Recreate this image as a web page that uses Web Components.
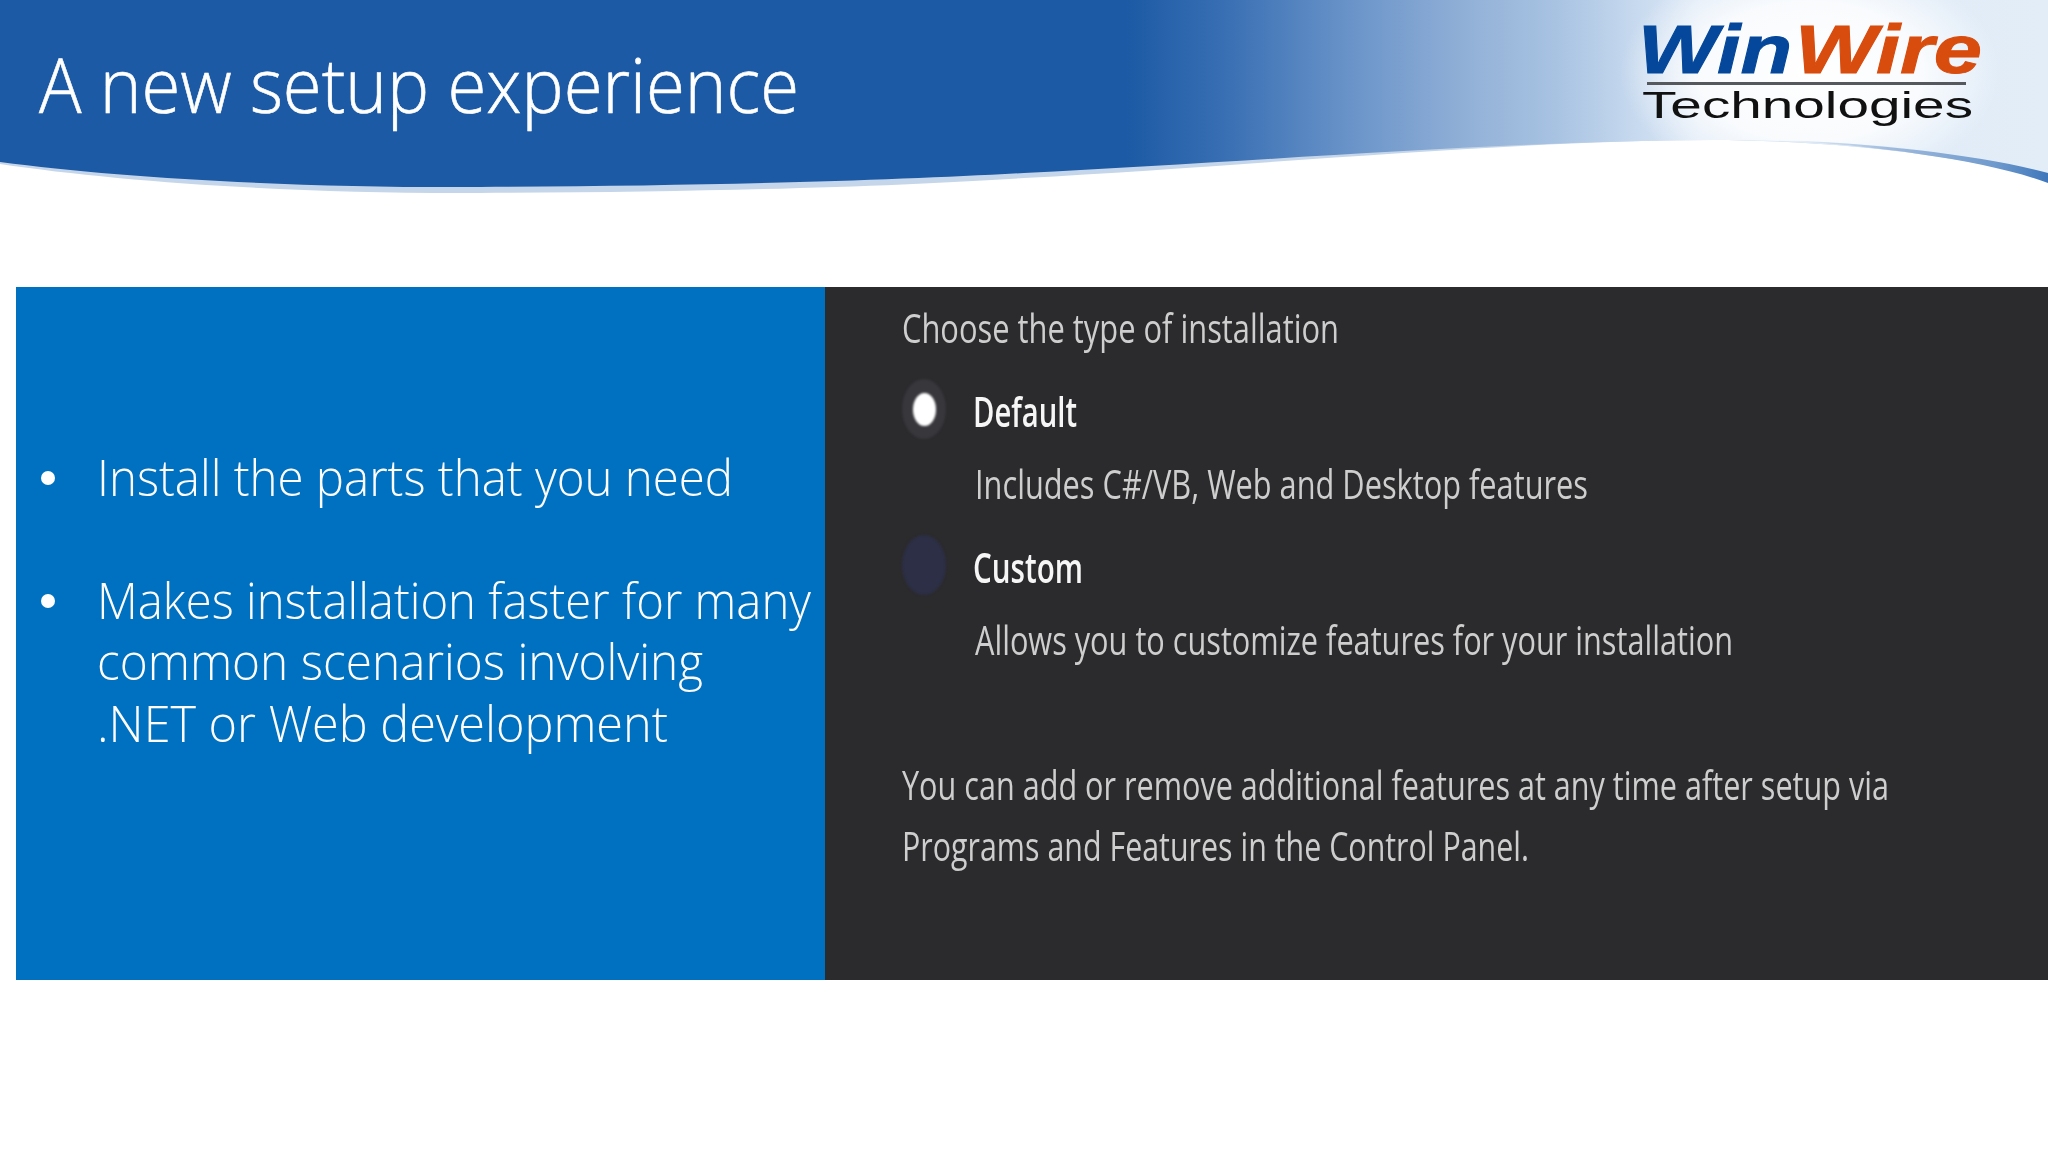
<!DOCTYPE html>
<html lang="en">
<head>
<meta charset="utf-8">
<title>A new setup experience</title>
<style>
html,body{margin:0;padding:0;background:#fff;}
body{width:2048px;height:1152px;overflow:hidden;font-family:"Open Sans","Liberation Sans",sans-serif;}
</style>
</head>
<body>
<setup-slide>
  <slide-header slot="header"><fit-line w="760">A new setup experience</fit-line></slide-header>
  <bullet-panel slot="left">
    <bullet-item><fit-line w="636">Install the parts that you need</fit-line></bullet-item>
    <bullet-item>
      <fit-line w="714">Makes installation faster for many</fit-line>
      <fit-line w="606">common scenarios involving</fit-line>
      <fit-line w="571">.NET or Web development</fit-line>
    </bullet-item>
  </bullet-panel>
  <install-panel slot="right">
    <fit-line class="h" w="437">Choose the type of installation</fit-line>
    <install-option checked style="margin-top:24px">
      <fit-line slot="label" w="104">Default</fit-line>
      <fit-line w="613">Includes C#/VB, Web and Desktop features</fit-line>
    </install-option>
    <install-option style="margin-top:24px">
      <fit-line slot="label" w="110">Custom</fit-line>
      <fit-line w="758">Allows you to customize features for your installation</fit-line>
    </install-option>
    <div class="note">
      <fit-line w="987">You can add or remove additional features at any time after setup via</fit-line>
      <fit-line w="627">Programs and Features in the Control Panel.</fit-line>
    </div>
  </install-panel>
</setup-slide>

<script>
function def(name, css, html, extra){
  const C = class extends HTMLElement{
    constructor(){super();this.attachShadow({mode:'open'}).innerHTML='<style>'+css+'</style>'+html;}
    connectedCallback(){ if(extra) extra.call(this); }
  };
  customElements.define(name,C);
}

def('setup-slide',`
  :host{display:block;width:2048px;height:1152px;background:#fff;overflow:hidden}
  .main{display:flex;margin:87px 0 0 16px;height:693px}
  ::slotted([slot=left]){width:809px;flex:none}
  ::slotted([slot=right]){flex:1}
`,`<slot name="header"></slot><div class="main"><slot name="left"></slot><slot name="right"></slot></div>`);

def('slide-header',`
  :host{display:block;position:relative;height:200px;box-sizing:border-box;padding:36px 0 0 39px;color:#fff;
    font-size:76px;font-weight:300;line-height:96px;-webkit-text-stroke:.6px #fff}
  svg.bg{position:absolute;left:0;top:0;width:2048px;height:200px;z-index:0}
  .t{position:relative;z-index:1}
  .logo{position:absolute;left:1630px;top:14px;z-index:1;width:360px;height:120px;-webkit-text-stroke:0;overflow:visible;filter:blur(.4px)}
  .logo text{font-family:"Liberation Sans",Arial,sans-serif}
  .logo .b{stroke-width:.9px}
`,`<svg class="bg" viewBox="0 0 2048 200" aria-hidden="true">
  <defs>
    <linearGradient id="g" x1="0" x2="1" y1="0" y2="0">
      <stop offset="0" stop-color="#1c5aa5"/>
      <stop offset=".55" stop-color="#1c5aa5"/>
      <stop offset=".60" stop-color="#3a70b4"/>
      <stop offset=".66" stop-color="#6a94c9"/>
      <stop offset=".72" stop-color="#94b2d8"/>
      <stop offset=".76" stop-color="#a8c3e2"/>
      <stop offset=".80" stop-color="#c8daef"/>
      <stop offset=".83" stop-color="#dfeaf7"/>
      <stop offset="1" stop-color="#e2edf8"/>
    </linearGradient>
    <radialGradient id="glow" cx="1810" cy="72" r="190" gradientUnits="userSpaceOnUse" gradientTransform="translate(0 27) scale(1 .62)">
      <stop offset="0" stop-color="#fff"/>
      <stop offset=".6" stop-color="#fff" stop-opacity=".8"/>
      <stop offset="1" stop-color="#fff" stop-opacity="0"/>
    </radialGradient>
    <linearGradient id="r" x1="1780" x2="2048" y1="0" y2="0" gradientUnits="userSpaceOnUse">
      <stop offset="0" stop-color="#b9cde6" stop-opacity="0"/>
      <stop offset=".4" stop-color="#a0bbdd"/>
      <stop offset=".8" stop-color="#6f9acd"/>
      <stop offset="1" stop-color="#3f77bb"/>
    </linearGradient>
  </defs>
  <path fill="#c5d6ea" d="M0 164C120 182 300 194 480 193C720 192 900 186 1024 178C1250 166 1500 141 1710 140C1850 140 1990 160 2048 182V0H0Z"/>
  <path fill="url(#g)" d="M0 162C120 178 300 188 480 187C720 186 900 180 1024 173C1250 162 1500 141 1710 140C1850 140 1990 160 2048 178V0H0Z"/>
  <path fill="url(#glow)" d="M1600 0H2010V165C1950 150 1850 140 1710 140L1600 146Z"/>
  <path fill="url(#r)" d="M1780 140C1880 143 1990 157 2048 173V183C1990 161 1880 146 1780 140Z"/>
</svg>
<div class="t"><slot></slot></div>
<svg class="logo" viewBox="1630 14 360 120">
  <text class="b" x="1638" y="73" font-size="68" font-weight="700" font-style="italic" fill="#05479a" stroke="#05479a" textLength="154" lengthAdjust="spacingAndGlyphs">Win</text>
  <text class="b" x="1795" y="73" font-size="68" font-weight="700" font-style="italic" fill="#d84c0e" stroke="#d84c0e" textLength="187" lengthAdjust="spacingAndGlyphs">Wire</text>
  <rect x="1647" y="82" width="319" height="3" fill="#55585c"/>
  <text x="1642" y="118" font-size="36" fill="#111" textLength="331" lengthAdjust="spacingAndGlyphs">Technologies</text>
</svg>`);

def('bullet-panel',`
  :host{display:flex;flex-direction:column;justify-content:center;gap:61px;box-sizing:border-box;
    height:693px;padding:0 0 66px 25px;background:#0070c0;color:#fff;font-size:50px;font-weight:300;line-height:61.5px}
`,`<slot></slot>`);

def('bullet-item',`
  :host{display:grid;grid-template-columns:56px 1fr}
  i{width:14px;height:14px;border-radius:50%;background:#fff;margin-top:24px}
`,`<i></i><div><slot></slot></div>`);

def('install-panel',`
  :host{display:block;box-sizing:border-box;height:693px;padding:10px 0 0 77px;background:#2b2a2d;color:#cecece;
    font-size:41px;line-height:60px;font-weight:400;overflow:hidden}
  ::slotted(.note){margin-top:85px;line-height:61px;filter:blur(.6px)}
  ::slotted(.h){filter:blur(.6px)}
`,`<slot></slot>`);

def('install-option',`
  :host{display:grid;grid-template-columns:71px 1fr;row-gap:12px;align-items:center}
  .r{width:44px;height:60px;border-radius:50%;display:flex;align-items:center;justify-content:center;
     background:#2c2f45;filter:blur(1.2px);align-self:start;margin-top:-2px}
  :host([checked]) .r{background:#38373c}
  :host([checked]) .r::after{content:"";width:23px;height:33px;border-radius:50%;background:#fff}
  .l{color:#f6f6f6;font-weight:600;filter:blur(.5px)}
  .d{grid-column:2;padding-left:2px;filter:blur(.6px)}
`,`<div class="r"></div><div class="l"><slot name="label"></slot></div><div class="d"><slot></slot></div>`);

def('fit-line',`
  :host{display:block;white-space:nowrap}
  span{display:inline-block;transform-origin:0 50%}
`,`<span><slot></slot></span>`,function(){
  const w=parseFloat(this.getAttribute('w'));
  const s=this.shadowRoot.querySelector('span');
  const n=s.getBoundingClientRect().width;
  if(w&&n) s.style.transform='scaleX('+(w/n)+')';
  this.style.width=w+'px';
});
</script>
</body>
</html>
